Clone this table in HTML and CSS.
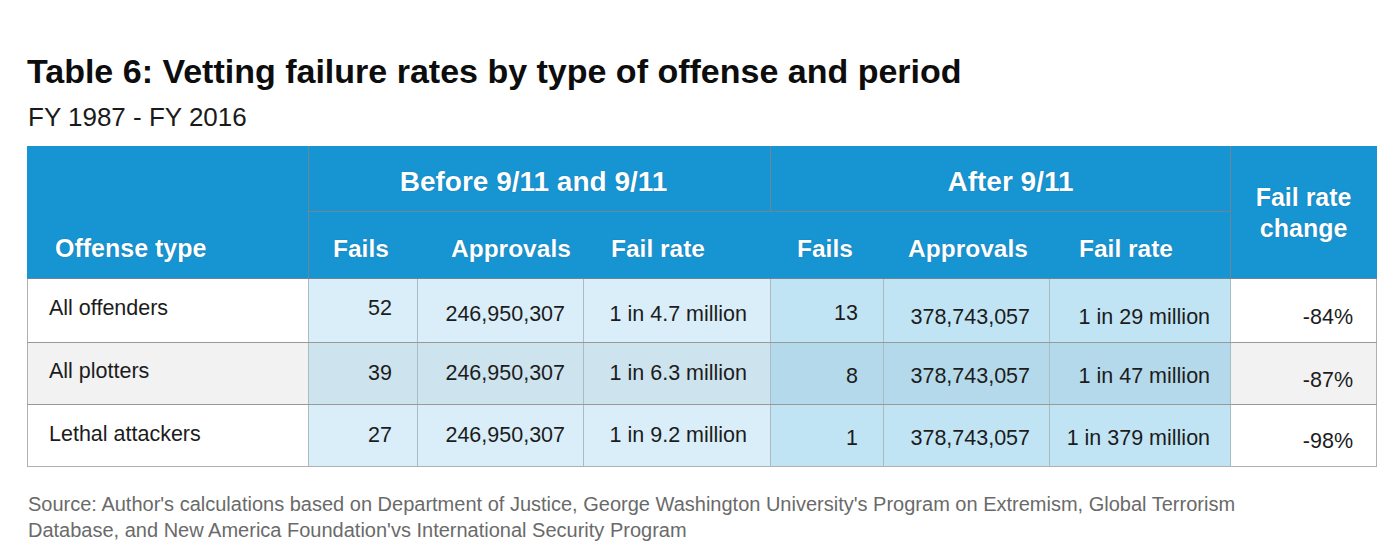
FILE: index.html
```html
<!DOCTYPE html>
<html lang="en">
<head>
<meta charset="utf-8">
<title>Table 6: Vetting failure rates by type of offense and period</title>
<link rel="stylesheet" href="styles.css">
</head>
<body>
<main class="page">
  <h1 class="title">Table 6: Vetting failure rates by type of offense and period</h1>
  <p class="subtitle">FY 1987 - FY 2016</p>
  <table class="data">
    <colgroup>
      <col class="c-type">
      <col class="c-bfails">
      <col class="c-bappr">
      <col class="c-brate">
      <col class="c-afails">
      <col class="c-aappr">
      <col class="c-arate">
      <col class="c-change">
    </colgroup>
    <thead>
      <tr class="hrow1">
        <th rowspan="2" class="h-type">Offense type</th>
        <th colspan="3" class="h-group h-before">Before 9/11 and 9/11</th>
        <th colspan="3" class="h-group h-after">After 9/11</th>
        <th rowspan="2" class="h-change">Fail rate<br>change</th>
      </tr>
      <tr class="hrow2">
        <th class="h-sub h-bfails">Fails</th>
        <th class="h-sub h-bappr">Approvals</th>
        <th class="h-sub h-brate">Fail rate</th>
        <th class="h-sub h-afails">Fails</th>
        <th class="h-sub h-aappr">Approvals</th>
        <th class="h-sub h-arate">Fail rate</th>
      </tr>
    </thead>
    <tbody>
      <tr class="row row-first">
        <td class="name v17">All offenders</td>
        <td class="bef num sep v17">52</td>
        <td class="bef num v23">246,950,307</td>
        <td class="bef num v23">1 in 4.7 million</td>
        <td class="aft num sep v22">13</td>
        <td class="aft num v26">378,743,057</td>
        <td class="aft num v26">1 in 29 million</td>
        <td class="chg num sep v26">-84%</td>
      </tr>
      <tr class="row row-alt">
        <td class="name v16">All plotters</td>
        <td class="bef num sep v18">39</td>
        <td class="bef num v18">246,950,307</td>
        <td class="bef num v18">1 in 6.3 million</td>
        <td class="aft num sep v21">8</td>
        <td class="aft num v21">378,743,057</td>
        <td class="aft num v21">1 in 47 million</td>
        <td class="chg num sep v25">-87%</td>
      </tr>
      <tr class="row row-last">
        <td class="name v17">Lethal attackers</td>
        <td class="bef num sep v18">27</td>
        <td class="bef num v18">246,950,307</td>
        <td class="bef num v18">1 in 9.2 million</td>
        <td class="aft num sep v21">1</td>
        <td class="aft num v21">378,743,057</td>
        <td class="aft num v21">1 in 379 million</td>
        <td class="chg num sep v24">-98%</td>
      </tr>
    </tbody>
  </table>
  <p class="source">Source: Author's calculations based on Department of Justice, George Washington University's Program on Extremism, Global Terrorism<br>Database, and New America Foundation'vs International Security Program</p>
</main>
</body>
</html>
```

FILE: styles.css
```css
html, body {
  margin: 0;
  padding: 0;
  background: #ffffff;
}

body {
  font-family: "Liberation Sans", Arial, sans-serif;
  color: #111111;
}

.page {
  padding: 51px 0 0 27px;
}

.title {
  margin: 0;
  font-size: 34px;
  font-weight: 700;
  line-height: 40px;
  color: #0d0d0d;
}

.subtitle {
  margin: 11px 0 0 1px;
  font-size: 26px;
  line-height: 30px;
  color: #1a1a1a;
}

.data {
  margin-top: 14px;
  border-collapse: collapse;
  table-layout: fixed;
  width: 1349px;
  border: 1px solid #b0b0b0;
}

.c-type { width: 281px; }
.c-bfails { width: 109px; }
.c-bappr { width: 166px; }
.c-brate { width: 187px; }
.c-afails { width: 113px; }
.c-aappr { width: 166px; }
.c-arate { width: 181px; }
.c-change { width: 146px; }

.data th {
  background: #1795d3;
  color: #ffffff;
  font-size: 24.5px;
  font-weight: 700;
  line-height: 31px;
  vertical-align: top;
  padding: 0;
  text-shadow: 0 0 1px #0b5f90;
  border: 1px solid #6b8797;
}

.hrow1 { height: 65px; }
.hrow2 { height: 67px; }

.h-type {
  text-align: left;
  font-size: 25px !important;
  padding: 86px 0 0 27px !important;
  border-left-color: #1795d3 !important;
  border-top-color: #1795d3 !important;
}

.h-group {
  text-align: center;
  font-size: 28px !important;
  padding-top: 19px !important;
  border-top-color: #1795d3 !important;
}

.h-before { padding-right: 12px !important; }
.h-after { padding-left: 20px !important; }

.h-change {
  text-align: center;
  font-size: 25px !important;
  padding-top: 35px !important;
  border-top-color: #1795d3 !important;
  border-right-color: #1795d3 !important;
}

.h-sub {
  text-align: left;
  padding-top: 21px !important;
  border-top-color: #5f7d8e !important;
  border-left-color: #1795d3 !important;
  border-right-color: #1795d3 !important;
}

.h-bfails { padding-left: 24px !important; border-left-color: #6b8797 !important; }
.h-bappr { padding-left: 33px !important; }
.h-brate { padding-left: 27px !important; }
.h-afails { padding-left: 26px !important; border-left-color: #6b8797 !important; }
.h-aappr { padding-left: 24px !important; }
.h-arate { padding-left: 29px !important; border-right-color: #6b8797 !important; }

.data td {
  font-size: 21.5px;
  line-height: 24px;
  vertical-align: top;
  padding: 0;
  color: #1c1c1c;
  border-top: 1px solid #999999;
  border-bottom: 1px solid #999999;
  border-left: 1px solid #a9bcc6;
  border-right: 1px solid #a9bcc6;
}

.row { height: 62px; }
.row-first { height: 64px; }

.data td.sep { border-left-color: #6f8a99; }

.name {
  padding-left: 21px !important;
  background: #ffffff;
  border-left-color: #b0b0b0 !important;
}

.num {
  text-align: right;
}

.bef { background: #d9eef8; }
.aft { background: #c0e4f4; }
.chg { background: #ffffff; padding-right: 23px !important; border-right-color: #b0b0b0 !important; }

.row-alt .name { background: #f2f2f2; }
.row-alt .bef { background: #cde3ee; }
.row-alt .aft { background: #b4d9ea; }
.row-alt .chg { background: #f2f2f2; }

.row-last td { border-bottom-color: #b0b0b0; }

.bef:nth-child(2) { padding-right: 25px !important; }
.bef:nth-child(3) { padding-right: 18px !important; }
.bef:nth-child(4) { padding-right: 23px !important; }
.aft:nth-child(5) { padding-right: 25px !important; }
.aft:nth-child(6) { padding-right: 19px !important; }
.aft:nth-child(7) { padding-right: 20px !important; }

.v16 { padding-top: 16px !important; }
.v17 { padding-top: 17px !important; }
.v18 { padding-top: 18px !important; }
.v21 { padding-top: 21px !important; }
.v22 { padding-top: 22px !important; }
.v23 { padding-top: 23px !important; }
.v24 { padding-top: 24px !important; }
.v25 { padding-top: 25px !important; }
.v26 { padding-top: 26px !important; }

.source {
  margin: 24px 0 0 1px;
  font-size: 20px;
  line-height: 26px;
  color: #6a6a6a;
}
```
